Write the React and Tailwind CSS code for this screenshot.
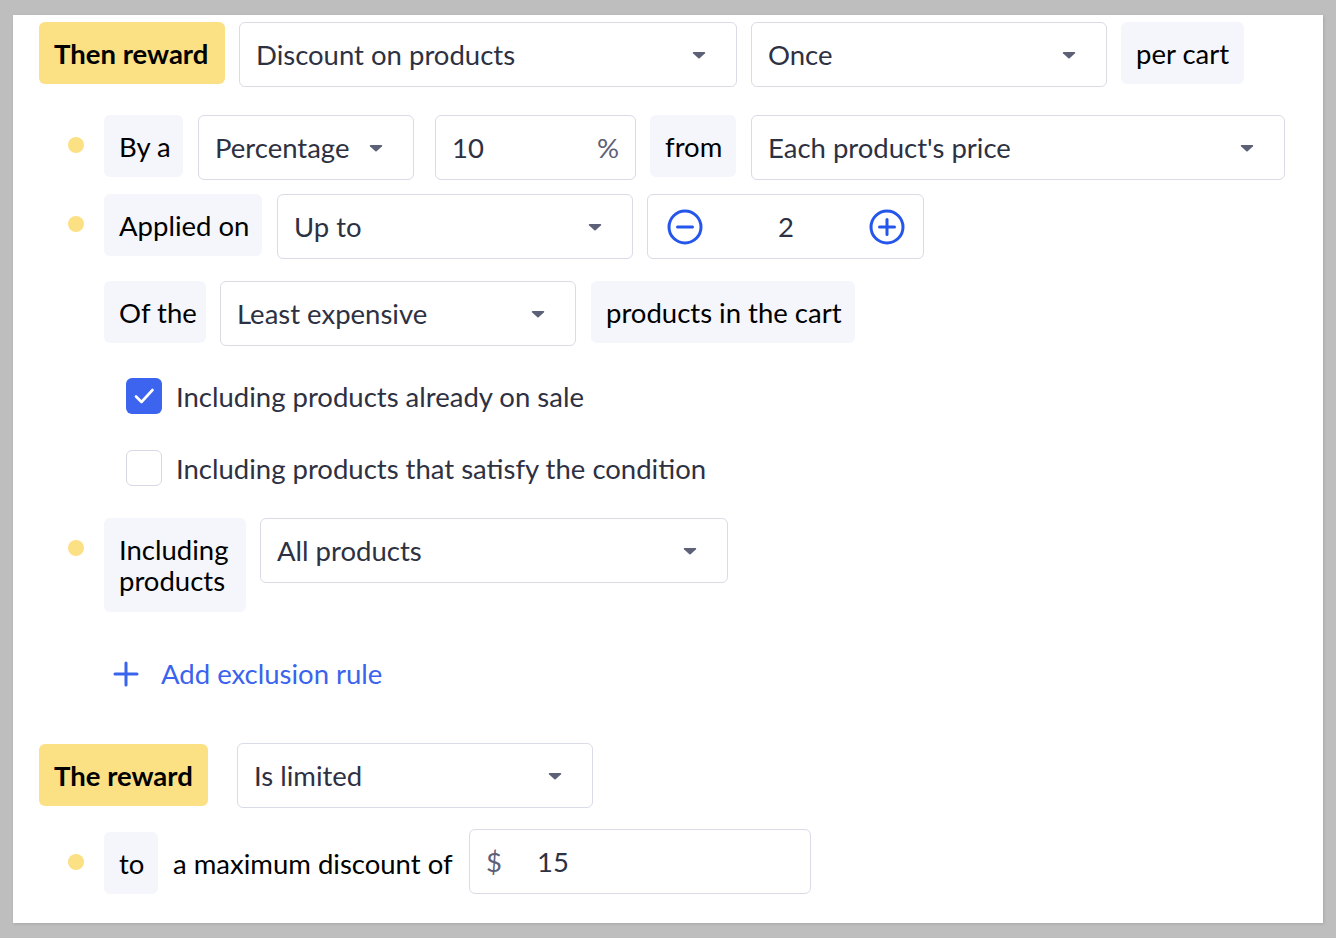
import React from 'react';

// --- small building blocks ---
const Caret = () => (
  <svg width="14" height="8" viewBox="0 0 14 8" className="shrink-0">
    <path d="M1.5 1h11a0.8 0.8 0 0 1 0.6 1.3l-5.5 5a0.9 0.9 0 0 1-1.2 0l-5.5-5A0.8 0.8 0 0 1 1.5 1z" fill="#5d6178" />
  </svg>
);

const Chip = ({ children, yellow, className = '' }) => (
  <div
    className={`h-[62px] shrink-0 flex items-center px-[15px] rounded-md text-black whitespace-nowrap ${
      yellow ? 'bg-[#fbe084] font-bold' : 'bg-[#f5f6fb]'
    } ${className}`}
  >
    {children}
  </div>
);

const Select = ({ label, width }) => (
  <div
    className={`h-[65px] shrink-0 flex items-center justify-between pl-4 pr-[30px] rounded-md border border-[#d9dbe6] bg-white text-[#2e3142] ${width}`}
  >
    <span>{label}</span>
    <Caret />
  </div>
);

const Dot = ({ className = 'mt-[22px]' }) => <div className={`w-4 h-4 rounded-full bg-[#fbe084] shrink-0 ${className}`} />;

const Row = ({ bullet = true, children, className = '' }) => (
  <div className={`flex items-start gap-5 pl-[29px] ${className}`}>
    {bullet ? <Dot /> : <div className="w-4 shrink-0" />}
    <div className="flex items-start gap-[15px]">{children}</div>
  </div>
);

const CircleIcon = ({ plus }) => (
  <svg width="36" height="36" viewBox="0 0 36 36">
    <circle cx="18" cy="18" r="16" fill="none" stroke="#2456ec" strokeWidth="3" />
    <path d="M10.5 18h15" stroke="#2456ec" strokeWidth="3" strokeLinecap="round" />
    {plus && <path d="M18 10.5v15" stroke="#2456ec" strokeWidth="3" strokeLinecap="round" />}
  </svg>
);

const Check = ({ checked, label }) => (
  <div className="flex items-center gap-[14px] pl-[87px]">
    {checked ? (
      <div className="w-9 h-9 rounded-md bg-[#3c64ee] flex items-center justify-center">
        <svg width="22" height="18" viewBox="0 0 22 18">
          <path d="M3 9.5l5.5 5.5L19.5 3" fill="none" stroke="white" strokeWidth="2.6" strokeLinecap="round" strokeLinejoin="round" />
        </svg>
      </div>
    ) : (
      <div className="w-9 h-9 rounded-md border border-[#d6d8e5] bg-white" />
    )}
    <span className="text-[#2e3142]">{label}</span>
  </div>
);

export default function App() {
  return (
    <div className="min-h-screen bg-[#bebebe] pt-[15px] pl-[13px] font-['Lato','Liberation_Sans',sans-serif] text-[27.5px] leading-[31px]">
      <div className="w-[1310px] h-[908px] bg-white shadow-[1px_1px_3px_rgba(0,0,0,0.12)] pt-[7px] pl-[26px]">
        {/* Then reward */}
        <div className="flex items-start gap-[14px]">
          <Chip yellow className="h-[61px] w-[186px]">Then reward</Chip>
          <Select label="Discount on products" width="w-[498px]" />
          <Select label="Once" width="w-[356px]" />
          <Chip className="h-[61px] w-[123px]">per cart</Chip>
        </div>

        <Row className="mt-[28px]">
          <Chip className="w-[79px]">By a</Chip>
          <Select label="Percentage" width="w-[216px]" />
          <div className="h-[65px] w-[201px] ml-[6px] flex items-center justify-between px-4 rounded-md border border-[#d9dbe6] text-[#2e3142]">
            <span>10</span>
            <span className="text-[#5d6178]">%</span>
          </div>
          <Chip className="w-[86px] -ml-px">from</Chip>
          <Select label="Each product's price" width="w-[534px]" />
        </Row>

        <Row className="mt-[14px]">
          <Chip className="w-[158px]">Applied on</Chip>
          <Select label="Up to" width="w-[356px]" />
          <div className="h-[65px] w-[277px] -ml-px flex items-center justify-between pl-[19px] pr-[18px] rounded-md border border-[#d9dbe6] text-[#2e3142]">
            <CircleIcon />
            <span>2</span>
            <CircleIcon plus />
          </div>
        </Row>

        <Row bullet={false} className="mt-[22px]">
          <Chip className="w-[102px]">Of the</Chip>
          <Select label="Least expensive" width="w-[356px] -ml-px" />
          <Chip className="w-[264px]">products in the cart</Chip>
        </Row>

        <div className="mt-[32px]">
          <Check checked label="Including products already on sale" />
        </div>
        <div className="mt-[36px]">
          <Check label="Including products that satisfy the condition" />
        </div>

        <Row className="mt-[32px]">
          <div className="w-[142px] py-4 px-[15px] rounded-md bg-[#f5f6fb] text-black">Including products</div>
          <Select label="All products" width="w-[468px] -ml-px" />
        </Row>

        <div className="mt-[46px] flex items-center gap-[22px] pl-[74px] text-[#3a63ee]">
          <svg width="26" height="26" viewBox="0 0 26 26">
            <path d="M13 2v22M2 13h22" stroke="#3a63ee" strokeWidth="3" strokeLinecap="round" />
          </svg>
          <span>Add exclusion rule</span>
        </div>

        {/* The reward */}
        <div className="mt-[54px] flex items-start gap-[29px]">
          <Chip yellow className="w-[169px] mt-px">The reward</Chip>
          <Select label="Is limited" width="w-[356px]" />
        </div>

        <div className="mt-[21px] flex items-start gap-5 pl-[29px]">
          <Dot className="mt-[25px]" />
          <div className="flex items-end gap-[15px]">
            <Chip className="w-[54px]">to</Chip>
            <div className="h-[62px] w-[283px] flex items-center text-black whitespace-nowrap">a maximum discount of</div>
            <div className="h-[65px] w-[342px] -ml-[2px] flex items-center pl-4 rounded-md border border-[#d9dbe6] text-[#2e3142]">
              <span className="text-[#5d6178] w-[51px]">$</span>
              <span>15</span>
            </div>
          </div>
        </div>
      </div>
    </div>
  );
}
